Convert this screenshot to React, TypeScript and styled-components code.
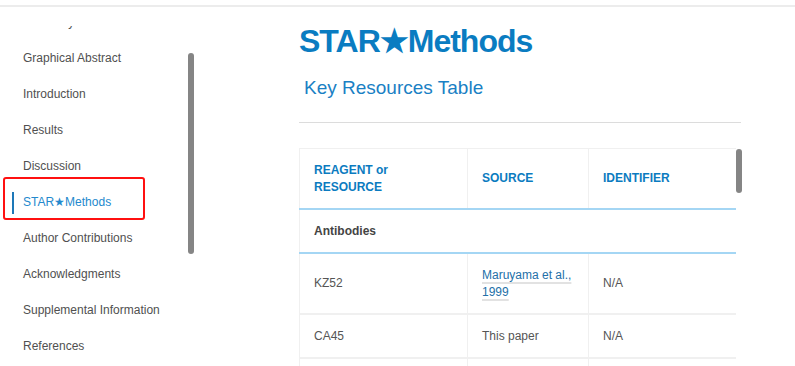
import { FC } from 'react';
import styled, { createGlobalStyle } from 'styled-components';

const NAV_ITEMS = [
  'Summary',
  'Graphical Abstract',
  'Introduction',
  'Results',
  'Discussion',
  'STAR★Methods',
  'Author Contributions',
  'Acknowledgments',
  'Supplemental Information',
  'References',
];
const ACTIVE_ITEM = 'STAR★Methods';

const GlobalStyle = createGlobalStyle`
  html, body {
    margin: 0;
    padding: 0;
    background: #ffffff;
  }
  body {
    font-family: 'Liberation Sans', Arial, sans-serif;
    overflow: hidden;
  }
`;

const SPage = styled.div`
  width: 795px;
  height: 366px;
  overflow: hidden;
  padding-top: 5px;
  box-sizing: border-box;
`;
const STopRule = styled.div`
  height: 2px;
  background: #ececec;
`;
const SBody = styled.div`
  display: flex;
  align-items: flex-start;
`;

/* sidebar, scrolled so that only the tail of the first item shows */
const SSidebar = styled.aside`
  display: flex;
  align-items: flex-start;
  width: 194px;
  flex-shrink: 0;
`;
const SNavViewport = styled.nav`
  width: 188px;
  height: 340px;
  margin-top: 19px;
  overflow: hidden;
`;
const SNavList = styled.ul`
  list-style: none;
  margin: -22px 0 0;
  padding: 0;
`;
const SNavItem = styled.li<{ active: boolean }>`
  position: relative;
  height: 36px;
  line-height: 37px;
  padding-left: 23px;
  font-size: 12px;
  color: ${({ active }) => (active ? '#2389cd' : '#505050')};
  white-space: nowrap;

  ${({ active }) =>
    active &&
    `
    &::before {
      content: '';
      position: absolute;
      left: 12px;
      top: 8px;
      width: 2px;
      height: 22px;
      background: #1d78b8;
    }
    &::after {
      content: '';
      position: absolute;
      left: 3px;
      top: -7px;
      width: 142px;
      height: 43px;
      box-sizing: border-box;
      border: 2px solid #ff1010;
      border-radius: 3px;
    }
  `}
`;
const SScrollTrack = styled.div<{ offset: number }>`
  width: 6px;
  padding-top: ${({ offset }) => offset}px;
`;
const SScrollThumb = styled.div<{ size: number }>`
  width: 6px;
  height: ${({ size }) => size}px;
  border-radius: 3px;
  background: #858585;
`;

/* main */
const SMain = styled.main`
  width: 442px;
  margin-left: 105px;
  padding-top: 15px;
`;
const STitle = styled.h1`
  margin: 0;
  font-size: 32px;
  line-height: 38px;
  font-weight: 700;
  color: #0a7cc1;
  letter-spacing: -1px;
`;
const SSubtitle = styled.h2`
  margin: 16px 0 0 5px;
  font-size: 19px;
  line-height: 24px;
  font-weight: 400;
  color: #1a80c4;
`;
const SRule = styled.hr`
  margin: 22px 0 0;
  border: none;
  border-top: 1px solid #dcdcdc;
`;
const STableArea = styled.div`
  display: flex;
  align-items: flex-start;
  margin-top: 25px;
`;
const STable = styled.table`
  width: 436px;
  border-collapse: collapse;
  table-layout: fixed;
  border-top: 1px solid #f0f0f0;
  border-left: 1px solid #f0f0f0;
  font-size: 12px;
  line-height: 17px;
  color: #555555;
`;
const SCol = styled.col<{ w: number }>`
  width: ${({ w }) => w}px;
`;
const SRow = styled.tr<{ accent?: boolean }>`
  border-bottom: 2px solid ${({ accent }) => (accent ? '#a4d6f4' : '#f0f0f0')};
`;
const SHeadCell = styled.th`
  padding: 12.5px 14px;
  text-align: left;
  font-weight: 700;
  color: #0b7bc0;
  vertical-align: middle;
  border-right: 1px solid #f0f0f0;
  &:last-child {
    border-right: none;
  }
`;
const SCell = styled.td<{ strong?: boolean }>`
  padding: 12.5px 14px;
  vertical-align: middle;
  border-right: 1px solid #f0f0f0;
  font-weight: ${({ strong }) => (strong ? 700 : 400)};
  color: ${({ strong }) => (strong ? '#444444' : '#555555')};
  &:last-child {
    border-right: none;
  }
`;
const SLink = styled.a`
  color: #2370a8;
  text-decoration: underline;
  text-decoration-color: #e2e2e2;
  text-decoration-thickness: 2px;
  text-underline-offset: 3px;
`;

const ROWS = [
  { reagent: 'KZ52', source: 'Maruyama et al., 1999', link: true, id: 'N/A' },
  { reagent: 'CA45', source: 'This paper', link: false, id: 'N/A' },
  { reagent: '', source: '', link: false, id: '' },
];

const App: FC = () => {
  return (
    <>
      <GlobalStyle />
      <SPage>
        <STopRule />
        <SBody>
          <SSidebar>
            <SNavViewport>
              <SNavList>
                {NAV_ITEMS.map((item) => (
                  <SNavItem key={item} active={item === ACTIVE_ITEM}>
                    {item}
                  </SNavItem>
                ))}
              </SNavList>
            </SNavViewport>
            <SScrollTrack offset={46}>
              <SScrollThumb size={201} />
            </SScrollTrack>
          </SSidebar>
          <SMain>
            <STitle>STAR★Methods</STitle>
            <SSubtitle>Key Resources Table</SSubtitle>
            <SRule />
            <STableArea>
              <STable>
                <colgroup>
                  <SCol w={168} />
                  <SCol w={121} />
                  <SCol w={147} />
                </colgroup>
                <thead>
                  <SRow accent>
                    <SHeadCell>
                      REAGENT or
                      <br />
                      RESOURCE
                    </SHeadCell>
                    <SHeadCell>SOURCE</SHeadCell>
                    <SHeadCell>IDENTIFIER</SHeadCell>
                  </SRow>
                </thead>
                <tbody>
                  <SRow accent>
                    <SCell strong colSpan={3}>
                      Antibodies
                    </SCell>
                  </SRow>
                  {ROWS.map((row, i) => (
                    <SRow key={i}>
                      <SCell>{row.reagent}</SCell>
                      <SCell>
                        {row.link ? <SLink href="#">{row.source}</SLink> : row.source}
                      </SCell>
                      <SCell>{row.id}</SCell>
                    </SRow>
                  ))}
                </tbody>
              </STable>
              <SScrollTrack offset={1}>
                <SScrollThumb size={44} />
              </SScrollTrack>
            </STableArea>
          </SMain>
        </SBody>
      </SPage>
    </>
  );
};

export default App;
